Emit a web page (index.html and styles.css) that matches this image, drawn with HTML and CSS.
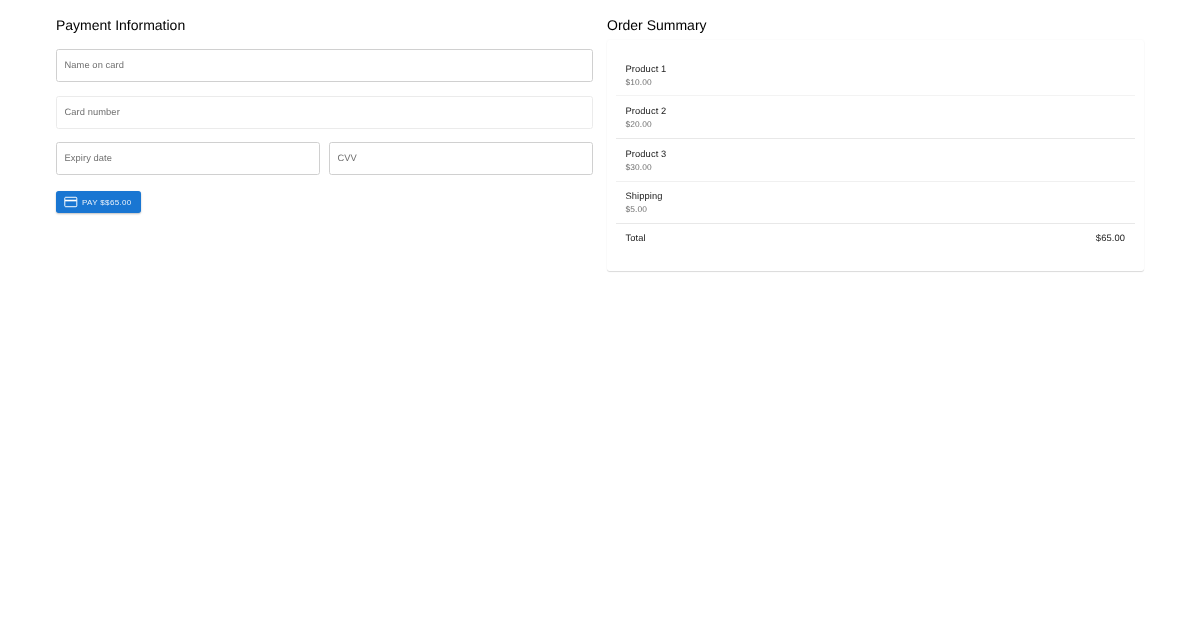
FILE: index.html
```html
<!DOCTYPE html>
<html lang="en">
<head>
<meta charset="utf-8">
<title>Checkout</title>
<link rel="stylesheet" href="styles.css">
</head>
<body>
<main class="page">
  <section class="col">
    <h2 class="title">Payment Information</h2>
    <form class="form">
      <div class="field"><span class="ph">Name on card</span></div>
      <div class="field field-light"><span class="ph">Card number</span></div>
      <div class="pair">
        <div class="field"><span class="ph">Expiry date</span></div>
        <div class="field"><span class="ph">CVV</span></div>
      </div>
      <button type="button" class="pay">
        <svg class="card-icon" viewBox="0 0 24 24" aria-hidden="true"><path fill="none" stroke="currentColor" stroke-width="1.5" d="M4 4.75h16c.7 0 1.25.55 1.25 1.25v12c0 .7-.55 1.25-1.25 1.25H4c-.7 0-1.25-.55-1.25-1.25V6c0-.7.55-1.25 1.25-1.25z"/><path fill="currentColor" d="M3 8.5h18V11H3z"/></svg>
        <span class="pay-label">PAY $$65.00</span>
      </button>
    </form>
  </section>
  <section class="col">
    <h2 class="title">Order Summary</h2>
    <div class="summary">
      <div class="item"><div class="name">Product 1</div><div class="price">$10.00</div></div>
      <div class="item"><div class="name">Product 2</div><div class="price">$20.00</div></div>
      <div class="item"><div class="name">Product 3</div><div class="price">$30.00</div></div>
      <div class="item item-last"><div class="name">Shipping</div><div class="price">$5.00</div></div>
      <div class="total"><span class="name">Total</span><span class="name">$65.00</span></div>
    </div>
  </section>
</main>
</body>
</html>
```
FILE: styles.css
```css
* { box-sizing: border-box; }
html, body { margin: 0; background: #fff; }
body {
  font-family: "Liberation Sans", Arial, sans-serif;
  color: #111;
  text-rendering: geometricPrecision;
}
.page {
  display: grid;
  grid-template-columns: 537px 537px;
  column-gap: 14px;
  width: 1108px;
  margin: 0 auto;
  padding: 16px 10px 10px;
  filter: blur(0.25px);
}
.title {
  margin: 0;
  height: 24px;
  font-size: 14px;
  line-height: 19.5px;
  font-weight: 400;
  color: #000;
}
.form { display: flex; flex-direction: column; padding-top: 9px; }
.field {
  display: flex;
  align-items: center;
  height: 33px;
  margin-bottom: 13.67px;
  padding: 0 7.5px;
  border: 1px solid #d0d0d0;
  border-radius: 2.67px;
}
.field-light { border-color: #ebebeb; }
.ph {
  font-size: 9.33px;
  letter-spacing: 0.08px;
  color: #707070;
  position: relative;
  top: -0.5px;
}
.pair {
  display: grid;
  grid-template-columns: 264px 264px;
  column-gap: 9px;
}
.pay {
  display: flex;
  align-items: center;
  gap: 3px;
  align-self: flex-start;
  width: 85px;
  height: 22px;
  margin-top: 2px;
  padding: 0 0 0 7px;
  border: 0;
  border-radius: 2.67px;
  background: #1976d2;
  color: #e8f1fb;
  font-family: inherit;
  font-size: 8px;
  letter-spacing: 0.35px;
  box-shadow: 0 1px 2px rgba(0,0,0,.25);
}
.pay-label { position: relative; top: 0.5px; }
.card-icon { width: 15.6px; height: 16px; flex: none; color: #fff; position: relative; top: 0.5px; margin-right: 0.4px; }
.summary {
  height: 231px;
  padding: 8px 9px;
  border-radius: 2.67px;
  background: #fff;
  box-shadow: 0 1px 1px rgba(0,0,0,.14), 0 0 2px rgba(0,0,0,.05);
}
.item {
  height: 42.67px;
  padding: 8px 9.5px 0;
  border-bottom: 1px solid #e8e8e8;
}
.item:first-child { height: 48.3px; padding-top: 14px; border-bottom-color: #f3f3f3; }
.item:nth-child(3) { border-bottom-color: #f0f0f0; }
.item-last { padding-top: 7.2px; }
.name { font-size: 9.33px; line-height: 14px; letter-spacing: 0.1px; color: #222; }
.price { font-size: 8.4px; line-height: 12px; letter-spacing: 0.1px; color: #707070; }
.total {
  display: flex;
  justify-content: space-between;
  padding: 7px 10px 0 9.5px;
}
```
